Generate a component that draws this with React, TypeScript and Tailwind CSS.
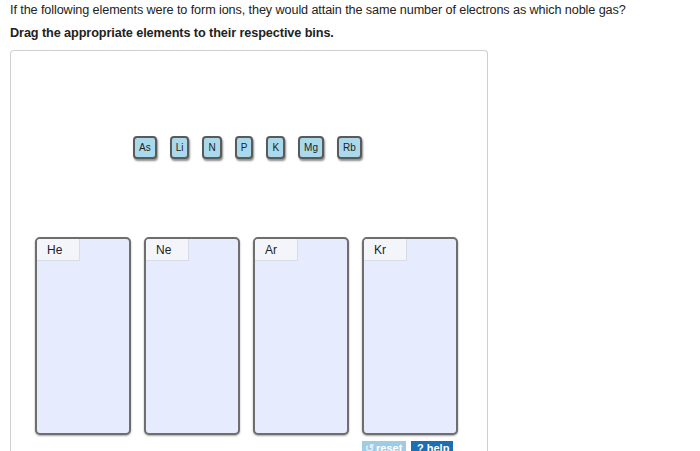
import React from "react"

const elements = ["As", "Li", "N", "P", "K", "Mg", "Rb"]
const bins = ["He", "Ne", "Ar", "Kr"]

function Tile({ label }: { label: string }) {
    return (
        <div className="h-[23px] min-w-[18px] px-[4px] flex items-center justify-center rounded-[4px] border-2 border-[#5a5a5a] bg-[#a9d9ea] text-[10px] text-[#222] shadow-[1px_2px_2px_rgba(0,0,0,0.45)]">
            {label}
        </div>
    )
}

function Bin({ label }: { label: string }) {
    return (
        <div className="w-[96px] h-[198px] rounded-[5px] border-2 border-[#6e6e6e] bg-[#e6ecfd] shadow-[0_1px_2px_rgba(0,0,0,0.35)] overflow-hidden">
            <div className="w-[43px] h-[22px] bg-[#f3f5fb] border-r border-b border-[#d8dce6] flex items-center pl-[10px] text-[12px] text-[#222]">
                {label}
            </div>
        </div>
    )
}

export default function App() {
    return (
        <div className="w-[700px] h-[451px] overflow-hidden bg-white font-['Liberation_Sans',Arial,sans-serif] text-[#222]">
            <p className="pl-[10px] pt-[3px] text-[12.65px] leading-[15px] tracking-[-0.1px]">
                If the following elements were to form ions, they would attain the same number of electrons as which noble gas?
            </p>
            <p className="pl-[10px] pt-[8px] text-[12.7px] leading-[15px] font-bold tracking-[-0.1px]">
                Drag the appropriate elements to their respective bins.
            </p>
            <div className="ml-[10px] mt-[9px] w-[478px] h-[420px] border border-b-0 border-[#cfcfcf] rounded-t-[4px] flex flex-col">
                <div className="flex items-center gap-[13px] pl-[122px] pt-[85px]">
                    {elements.map((e) => (
                        <Tile key={e} label={e} />
                    ))}
                </div>
                <div className="flex gap-[13px] pl-[24px] pt-[78px]">
                    {bins.map((b) => (
                        <Bin key={b} label={b} />
                    ))}
                </div>
                <div className="flex gap-[5px] pl-[351px] pt-[6px]">
                    <div className="h-[14px] w-[44px] bg-[#9fcbe6] text-white text-[11px] font-bold leading-[14px] pl-[3px] flex gap-[2px]">
                        <span className="text-[#e6f2fa]">↺</span>reset
                    </div>
                    <div className="h-[14px] w-[42px] bg-[#1a6fb5] text-white text-[11px] font-bold leading-[14px] pl-[6px]">
                        ? help
                    </div>
                </div>
            </div>
        </div>
    )
}
